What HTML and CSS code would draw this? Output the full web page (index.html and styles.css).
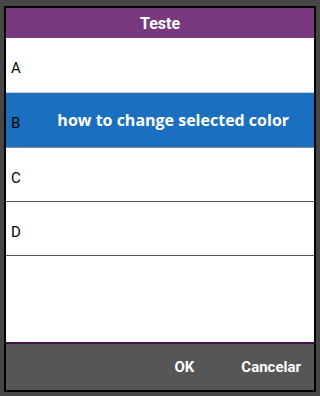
FILE: index.html
```html
<!DOCTYPE html>
<html lang="pt">
<head>
    <meta charset="UTF-8">
    <meta name="viewport" content="width=device-width, initial-scale=1.0">
    <title>Teste</title>
    <link rel="stylesheet" href="styles.css">
</head>
<body>
    <div class="dialog">
        <div class="dialog-title">Teste</div>
        <div class="list">
            <div class="row tall"><span class="label">A</span></div>
            <div class="row tall selected">
                <span class="label">B</span>
                <span class="hint">how to change selected color</span>
            </div>
            <div class="row mid"><span class="label">C</span></div>
            <div class="row"><span class="label">D</span></div>
        </div>
        <div class="buttons">
            <span class="btn">OK</span>
            <span class="btn">Cancelar</span>
        </div>
    </div>
</body>
</html>
```

FILE: styles.css
```css
* {
    margin: 0;
    padding: 0;
    box-sizing: border-box;
}

body {
    background: #464646;
    font-family: 'Roboto', 'Liberation Sans', sans-serif;
    padding: 6px 4px 4px 4px;
}

.dialog {
    width: 312px;
    height: 386px;
    border: 2px solid #000;
    display: flex;
    flex-direction: column;
}

.dialog-title {
    height: 30px;
    background: #79397f;
    color: #fff;
    font-size: 16px;
    font-weight: bold;
    display: flex;
    align-items: center;
    justify-content: center;
}

.list {
    flex: 1;
    background: #fff;
    border-bottom: 2px solid #4a1152;
}

.row {
    height: 54px;
    display: flex;
    align-items: center;
    padding-left: 5px;
    font-size: 15px;
    color: #000;
    border-bottom: 1px solid #555;
}

.row.tall {
    height: 55px;
    border-bottom-color: #cfcfcf;
}

.row.selected {
    background: #1a6fc1;
    border-bottom-color: #8f8f8f;
}

.label {
    margin-top: 6px;
}

.hint {
    font-family: 'Open Sans', sans-serif;
    font-weight: bold;
    font-size: 16px;
    color: #fff;
    margin-left: 37px;
}

.buttons {
    height: 46px;
    background: #565656;
    display: flex;
    justify-content: flex-end;
    align-items: center;
    padding-right: 13px;
    gap: 47px;
}

.btn {
    color: #fff;
    font-size: 15px;
    font-weight: bold;
}
```
